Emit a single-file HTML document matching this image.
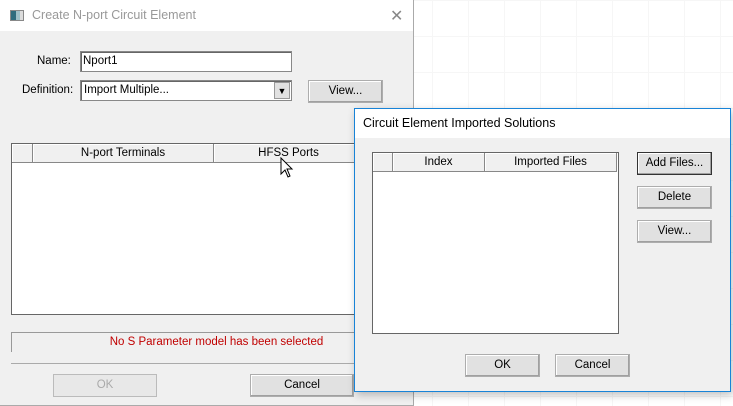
<!DOCTYPE html>
<html><head><style>
*{box-sizing:border-box;margin:0;padding:0}
body{width:733px;height:406px;overflow:hidden;position:relative;font-family:"Liberation Sans",sans-serif;font-size:11.5px;color:#000;
background-color:#fff;background-image:linear-gradient(#f6f6f6 1px,transparent 1px),linear-gradient(90deg,#f6f6f6 1px,transparent 1px);background-size:36px 36px}
.a{position:absolute}
.btn{position:absolute;background:#e1e1e1;border:1px solid #adadad;text-align:center;line-height:20px;box-shadow:inset -1px -1px 0 #a0a0a0,inset 1px 1px 0 #fff}
.hdr{position:absolute;background:#f0f0f0;border-right:1px solid #888;border-bottom:1px solid #888;box-shadow:inset 1px 1px 0 #fff;text-align:center;line-height:18px}
</style></head><body>
<div class="a" style="left:0;top:0;width:414px;height:406px;background:#f0f0f0;border:1px solid #aaa;border-top:none;border-left:none"></div>
<div class="a" style="left:0;top:0;width:413px;height:31px;background:#fff"></div>
<div class="a" style="left:10px;top:10px;width:14px;height:11px;border:1px solid #888;background:linear-gradient(90deg,#2f6c7e 0 5px,#9fc0c8 5px 9px,#ddd 9px)"></div>
<div class="a" style="left:32px;top:8px;color:#999;font-size:12.5px">Create N-port Circuit Element</div>
<div class="a" style="left:390px;top:6px;color:#888;font-size:16px">✕</div>
<div class="a" style="left:37px;top:55px">Name:</div>
<div class="a" style="left:80px;top:51px;width:212px;height:21px;background:#fff;border:1px solid #888;box-shadow:inset 1px 1px 0 #666;padding:3px 2px">Nport1</div>
<div class="a" style="left:22px;top:84px">Definition:</div>
<div class="a" style="left:80px;top:80px;width:212px;height:21px;background:#fff;border:1px solid #888;box-shadow:inset 1px 1px 0 #666;padding:3px 3px">Import Multiple...</div>
<div class="a" style="left:274px;top:82px;width:16px;height:17px;background:#e1e1e1;border:1px solid #999;font-size:9px;text-align:center;line-height:16px">▼</div>
<div class="btn" style="left:308px;top:80px;width:75px;height:23px">View...</div>
<div class="a" style="left:11px;top:143px;width:350px;height:172px;background:#fff;border:1px solid #666"></div>
<div class="hdr" style="left:12px;top:144px;width:21px;height:19px"></div>
<div class="hdr" style="left:33px;top:144px;width:181px;height:19px">N-port Terminals</div>
<div class="hdr" style="left:214px;top:144px;width:150px;height:19px">HFSS Ports</div>
<div class="a" style="left:11px;top:332px;width:350px;height:20px;border-top:1px solid #999;border-left:1px solid #999;color:#c00000;text-align:center;line-height:19px;padding-left:60px">No S Parameter model has been selected</div>
<div class="a" style="left:11px;top:363px;width:350px;height:1px;background:#aaa"></div>
<div class="btn" style="left:53px;top:374px;width:104px;height:23px;color:#aaa;box-shadow:none;border-color:#bbb;background:#e8e8e8">OK</div>
<div class="btn" style="left:250px;top:374px;width:104px;height:23px">Cancel</div>
<svg class="a" style="left:280px;top:157px" width="14" height="22"><path d="M1 1 L1 17 L5 13 L8 20 L10 19 L7 12 L12 12 Z" fill="#fff" stroke="#000"/></svg>
<div class="a" style="left:354px;top:108px;width:377px;height:284px;background:#f0f0f0;border:1px solid #1883d7;box-shadow:2px 3px 8px rgba(0,0,0,.25)"></div>
<div class="a" style="left:355px;top:109px;width:375px;height:29px;background:#fff"></div>
<div class="a" style="left:363px;top:116px;font-size:12.5px">Circuit Element Imported Solutions</div>
<div class="a" style="left:372px;top:152px;width:247px;height:182px;background:#fff;border:1px solid #666"></div>
<div class="hdr" style="left:373px;top:153px;width:20px;height:19px"></div>
<div class="hdr" style="left:393px;top:153px;width:92px;height:19px">Index</div>
<div class="hdr" style="left:485px;top:153px;width:132px;height:19px">Imported Files</div>
<div class="btn" style="left:637px;top:152px;width:75px;height:23px;border-color:#333">Add Files...</div>
<div class="btn" style="left:637px;top:186px;width:75px;height:23px">Delete</div>
<div class="btn" style="left:637px;top:220px;width:75px;height:23px">View...</div>
<div class="btn" style="left:465px;top:354px;width:75px;height:23px">OK</div>
<div class="btn" style="left:555px;top:354px;width:75px;height:23px">Cancel</div>
</body></html>
